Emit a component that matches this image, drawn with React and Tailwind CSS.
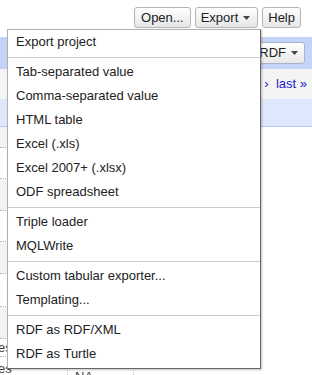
import React from "react";

function Btn({ children, className = "" }) {
  return (
    <div
      className={
        "h-[21px] flex items-center px-[5px] border border-[#b5b5b5] rounded-[3px] bg-linear-to-b from-white to-[#e6e6e6] text-[13px] leading-none text-[#222] " +
        className
      }
    >
      {children}
    </div>
  );
}

function Caret() {
  return (
    <svg width="7" height="4" viewBox="0 0 7 4" className="ml-[5px] mr-[2px]">
      <path d="M0 0 L7 0 L3.5 4 Z" fill="#444" />
    </svg>
  );
}

const menu = [
  "Export project",
  "-",
  "Tab-separated value",
  "Comma-separated value",
  "HTML table",
  "Excel (.xls)",
  "Excel 2007+ (.xlsx)",
  "ODF spreadsheet",
  "-",
  "Triple loader",
  "MQLWrite",
  "-",
  "Custom tabular exporter...",
  "Templating...",
  "-",
  "RDF as RDF/XML",
  "RDF as Turtle",
];

const rows = [
  { h: "h-[21px]", bg: "bg-[#f2f2f2]", a: "" },
  { h: "h-[31px]", bg: "bg-white", a: "" },
  { h: "h-[32px]", bg: "bg-[#f2f2f2]", a: "" },
  { h: "h-[31px]", bg: "bg-white", a: "" },
  { h: "h-[32px]", bg: "bg-[#f2f2f2]", a: "" },
  { h: "h-[33px]", bg: "bg-white", a: "" },
  { h: "h-[32px]", bg: "bg-[#f2f2f2]", a: "" },
  { h: "h-[18px]", bg: "bg-white", a: "es" },
  { h: "h-[24px]", bg: "bg-white", a: "es", b: "NA" },
];

export default function App() {
  return (
    <div className="relative w-[312px] h-[375px] overflow-hidden bg-white font-['Liberation_Sans',Arial,sans-serif] text-[13px] text-[#222]">
      {/* toolbar */}
      <div className="h-[37px] flex justify-end items-start gap-[4px] pt-[7px] pr-[11px]">
        <Btn className="px-[6px]">Open...</Btn>
        <Btn>
          Export
          <Caret />
        </Btn>
        <Btn className="px-[4px]">Help</Btn>
      </div>

      {/* header band */}
      <div className="h-[32px] bg-[#c3d4f8] flex items-center justify-end pr-[7px]">
        <div className="h-[22px] flex items-center pl-[8px] pr-[4px] border border-[#aab4c8] rounded-[3px] bg-linear-to-b from-white to-[#e8e8e8] text-[#222]">
          RDF
          <Caret />
        </div>
      </div>

      {/* pager row */}
      <div className="h-[30px] bg-[#f4f4f4] flex items-center justify-end pr-[5px] text-[#1a1acc]">
        <span>next ›&nbsp;&nbsp;last »</span>
      </div>

      {/* column header band */}
      <div className="h-[28px] bg-[#dee7fb] border-b border-[#b3c8f3]"></div>

      {/* table rows */}
      <div className="w-[134px] flex flex-col">
        {rows.map((r, i) => (
          <div key={i} className={"flex " + r.h + " " + r.bg}>
            <div className="w-[68px] border-b border-dotted border-[#bbb] border-r border-r-[#ccc] border-r-solid flex items-center overflow-hidden">
              <span className="-ml-[2px] text-[#444]">{r.a}</span>
            </div>
            <div className="w-[66px] border-b border-dotted border-[#bbb] border-r border-r-[#ccc] flex items-end overflow-hidden pl-[7px]">
              <span className="text-[#444] translate-y-[6px]">{r.b || ""}</span>
            </div>
          </div>
        ))}
      </div>

      {/* export menu */}
      <div className="absolute left-[7px] top-[29px] w-[254px] bg-white border border-[#b0b0b0] border-r-[#666] border-b-[#666] pb-[2px] shadow-[1px_1px_2px_rgba(0,0,0,0.25)]">
        {menu.map((m, i) =>
          m === "-" ? (
            <div key={i} className="mt-[3px] mb-[2px] h-px bg-[#ccc]" />
          ) : (
            <div key={i} className="h-[24px] flex items-center pl-[8px] text-[13px] text-[#222]">
              {m}
            </div>
          )
        )}
      </div>
    </div>
  );
}
